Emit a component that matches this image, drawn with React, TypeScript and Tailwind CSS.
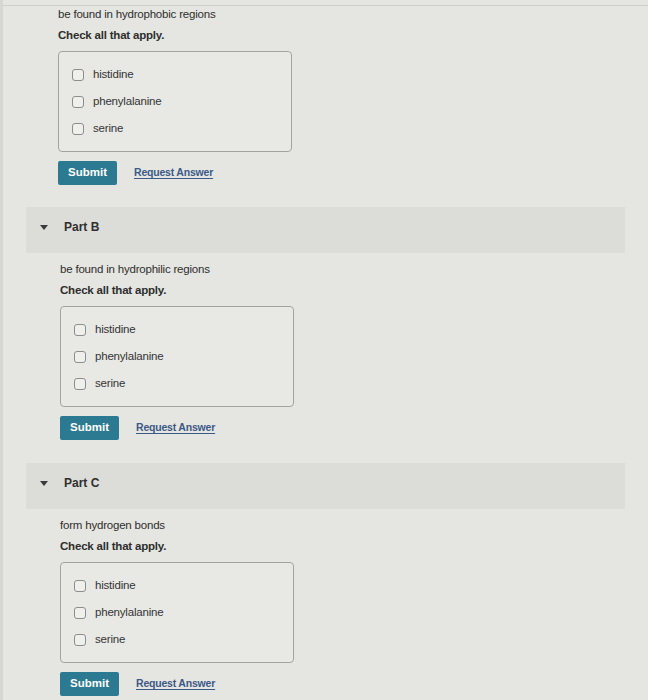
import React from "react";

const OPTIONS = ["histidine", "phenylalanine", "serine"];

type QuestionProps = {
  prompt: string;
  indent: string;
};

const Checkbox = () => (
  <span className="block w-[12px] h-[12px] rounded-[3px] border border-[#8d8d8b] bg-[#efefec]" />
);

const Question = ({ prompt, indent }: QuestionProps) => {
  return (
    <div className={indent}>
      <p className="h-4 leading-4 text-[11.5px] tracking-[-0.2px] text-[#2e2e2e]">{prompt}</p>
      <p className="mt-[5px] h-4 leading-4 text-[11.5px] tracking-[-0.2px] font-bold text-[#2e2e2e]">
        Check all that apply.
      </p>

      {/* Choices */}
      <div className="mt-[8px] w-[234px] h-[101px] rounded-[4px] border border-[#a3a3a0] bg-[#e8e8e5] pl-[13px] pt-[9px]">
        {OPTIONS.map((opt) => (
          <label key={opt} className="flex items-center gap-[9px] h-[27px]">
            <Checkbox />
            <span className="text-[11.5px] tracking-[-0.2px] text-[#353535]">{opt}</span>
          </label>
        ))}
      </div>

      {/* Actions */}
      <div className="mt-[9px] flex items-center gap-[17px]">
        <button className="w-[59px] h-[24px] rounded-[2px] bg-[#2c7a92] text-white text-[11.5px] font-bold">
          Submit
        </button>
        <a className="text-[10.5px] tracking-[-0.2px] font-bold text-[#3b5a88] underline underline-offset-2">
          Request Answer
        </a>
      </div>
    </div>
  );
};

const PartHeader = ({ label }: { label: string }) => (
  <div className="ml-[23px] mr-[23px] h-[46px] bg-[#dcdcd8] flex items-center pb-[6px]">
    <span className="ml-[14px] w-0 h-0 border-l-[4.5px] border-r-[4.5px] border-t-[5px] border-l-transparent border-r-transparent border-t-[#3a3a3a]" />
    <span className="ml-[16px] text-[12px] font-bold text-[#2f2f2f]">{label}</span>
  </div>
);

export default function App() {
  return (
    <div
      className="w-[648px] h-[700px] overflow-hidden bg-[#e5e5e1] border-l-[3px] border-l-[#d6d6d2]"
      style={{ fontFamily: '"Liberation Sans", Arial, sans-serif' }}
    >
      <div className="mt-[5px] border-t border-[#cfcfcb]" />

      {/* Part A (scrolled) */}
      <Question prompt="be found in hydrophobic regions" indent="pl-[55px]" />

      <div className="mt-[22px]">
        <PartHeader label="Part B" />
      </div>
      <div className="mt-[8px]">
        <Question prompt="be found in hydrophilic regions" indent="pl-[57px]" />
      </div>

      <div className="mt-[23px]">
        <PartHeader label="Part C" />
      </div>
      <div className="mt-[8px]">
        <Question prompt="form hydrogen bonds" indent="pl-[57px]" />
      </div>
    </div>
  );
}
